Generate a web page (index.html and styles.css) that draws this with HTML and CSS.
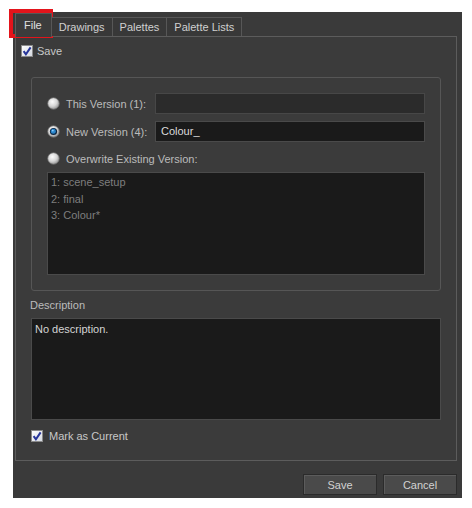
FILE: index.html
```html
<!DOCTYPE html>
<html>
<head>
<meta charset="utf-8">
<link rel="stylesheet" href="styles.css">
</head>
<body>
<div class="window">
  <div class="tabbar">
    <div class="tab active">File</div>
    <div class="tab">Drawings</div>
    <div class="tab">Palettes</div>
    <div class="tab">Palette Lists</div>
  </div>
  <div class="pane">
    <div class="check-row save-row">
      <svg class="checkbox" width="12" height="12" viewBox="0 0 12 12"><defs><linearGradient id="cb" x1="0" y1="0" x2="1" y2="1"><stop offset="0" stop-color="#ffffff"/><stop offset="1" stop-color="#d4d8e0"/></linearGradient></defs><rect x="0.5" y="0.5" width="11" height="11" fill="url(#cb)" stroke="#8a8a8a"/><path d="M2.6 6.2 L4.9 9.2 L9.6 2.4" stroke="#27359a" stroke-width="2" fill="none"/></svg>
      <span>Save</span>
    </div>
    <div class="group">
      <div class="opt-row">
        <div class="opt-head">
          <svg class="radio" width="13" height="13" viewBox="0 0 13 13"><defs><radialGradient id="rg" cx="40%" cy="35%" r="70%"><stop offset="0" stop-color="#fbfbfb"/><stop offset="0.55" stop-color="#d6d6d6"/><stop offset="1" stop-color="#8c8c8c"/></radialGradient></defs><circle cx="6.5" cy="6.5" r="5.8" fill="url(#rg)" stroke="#6c6c6c" stroke-width="0.8"/></svg>
          <span class="opt-label">This Version (1):</span>
        </div>
        <div class="field disabled"></div>
      </div>
      <div class="opt-row second">
        <div class="opt-head">
          <svg class="radio" width="13" height="13" viewBox="0 0 13 13"><circle cx="6.5" cy="6.5" r="5.8" fill="url(#rg)" stroke="#6c6c6c" stroke-width="0.8"/><circle cx="6.5" cy="6.5" r="3.6" fill="#0b2440"/><circle cx="6.3" cy="6.2" r="2.5" fill="#2a86cc"/><circle cx="5.8" cy="5.6" r="0.9" fill="#8fd0ff"/></svg>
          <span class="opt-label">New Version (4):</span>
        </div>
        <div class="field">Colour_</div>
      </div>
      <div class="opt-row third">
        <div class="opt-head">
          <svg class="radio" width="13" height="13" viewBox="0 0 13 13"><circle cx="6.5" cy="6.5" r="5.8" fill="url(#rg)" stroke="#6c6c6c" stroke-width="0.8"/></svg>
          <span class="opt-label">Overwrite Existing Version:</span>
        </div>
      </div>
      <div class="version-list">
        <div class="version-item">1: scene_setup</div>
        <div class="version-item">2: final</div>
        <div class="version-item">3: Colour*</div>
      </div>
    </div>
    <div class="desc-label">Description</div>
    <div class="desc-box">No description.</div>
    <div class="check-row current-row">
      <svg class="checkbox" width="12" height="12" viewBox="0 0 12 12"><rect x="0.5" y="0.5" width="11" height="11" fill="url(#cb)" stroke="#8a8a8a"/><path d="M2.6 6.2 L4.9 9.2 L9.6 2.4" stroke="#27359a" stroke-width="2" fill="none"/></svg>
      <span>Mark as Current</span>
    </div>
  </div>
  <div class="buttons">
    <button class="btn">Save</button>
    <button class="btn">Cancel</button>
  </div>
</div>
<div class="highlight"></div>
</body>
</html>
```

FILE: styles.css
```css
html, body {
  margin: 0;
  padding: 0;
  background: #ffffff;
}

body {
  font-family: "Liberation Sans", Arial, sans-serif;
  font-size: 11px;
  color: #cfcfcf;
}

.window {
  margin: 12px 0 0 13px;
  width: 449px;
  height: 486px;
  box-sizing: border-box;
  padding: 0 5px 0 2px;
  background: #3a3a3a;
  display: flex;
  flex-direction: column;
}

.tabbar {
  display: flex;
  align-items: flex-end;
  height: 24px;
  position: relative;
  z-index: 1;
}

.tab {
  height: 19px;
  box-sizing: border-box;
  padding: 1px 7px 0;
  border-top: 1px solid #575757;
  border-right: 1px solid #575757;
  background: #383838;
  line-height: 17px;
  color: #d0d0d0;
  white-space: nowrap;
}

.tab.active {
  height: 24px;
  padding: 3px 9px 0 8px;
  border-left: 1px solid #5c5c5c;
  background: #3c3c3c;
  margin-bottom: -1px;
  color: #e0e0e0;
}

.pane {
  height: 425px;
  box-sizing: border-box;
  border: 1px solid #5c5c5c;
  background: #3b3b3b;
  display: flex;
  flex-direction: column;
}

.check-row {
  display: flex;
  align-items: center;
  gap: 4px;
  height: 12px;
  color: #c8c8c8;
}

.checkbox {
  flex: none;
  display: block;
}

.save-row {
  margin: 8px 0 0 5px;
}

.group {
  margin: 20px 15px 0 15px;
  border: 1px solid #565656;
  border-radius: 3px;
  padding: 15px;
}

.opt-row {
  display: flex;
  align-items: center;
  height: 21px;
}

.opt-row.second {
  margin-top: 7px;
}

.opt-row.third {
  margin-top: 6px;
}

.opt-head {
  width: 108px;
  flex: none;
  display: flex;
  align-items: center;
  gap: 6px;
  white-space: nowrap;
}

.radio {
  flex: none;
  display: block;
}

.opt-label {
  color: #bcbcbc;
}

.field {
  flex: 1;
  height: 21px;
  box-sizing: border-box;
  border: 1px solid #4a4a4a;
  background: #1a1a1a;
  color: #dadada;
  line-height: 19px;
  padding-left: 5px;
}

.field.disabled {
  background: #2b2b2b;
  border-color: #474747;
}

.version-list {
  margin-top: 3px;
  height: 103px;
  box-sizing: border-box;
  border: 1px solid #4a4a4a;
  background: #1a1a1a;
  padding: 1px 3px;
}

.version-item {
  line-height: 16.5px;
  color: #7e7e7e;
}

.desc-label {
  margin: 6px 0 0 14px;
  line-height: 16px;
  color: #bcbcbc;
}

.desc-box {
  margin: 5px 15px 0 15px;
  height: 102px;
  box-sizing: border-box;
  border: 1px solid #4a4a4a;
  background: #1a1a1a;
  padding: 2px 3px;
  line-height: 16px;
  color: #d4d4d4;
}

.current-row {
  margin: 10px 0 0 15px;
  gap: 6px;
}

.buttons {
  display: flex;
  justify-content: flex-end;
  gap: 6px;
  margin-top: 13px;
}

.btn {
  width: 74px;
  height: 21px;
  box-sizing: border-box;
  border: 1px solid #2b2b2b;
  box-shadow: inset 1px 1px 0 #5c5c5c;
  background: #4a4a4a;
  color: #d2d2d2;
  font-family: "Liberation Sans", Arial, sans-serif;
  font-size: 11px;
  padding: 0;
}

.highlight {
  position: absolute;
  left: 9px;
  top: 9px;
  width: 44px;
  height: 29px;
  box-sizing: border-box;
  border: 4px solid #e3141b;
}
```
